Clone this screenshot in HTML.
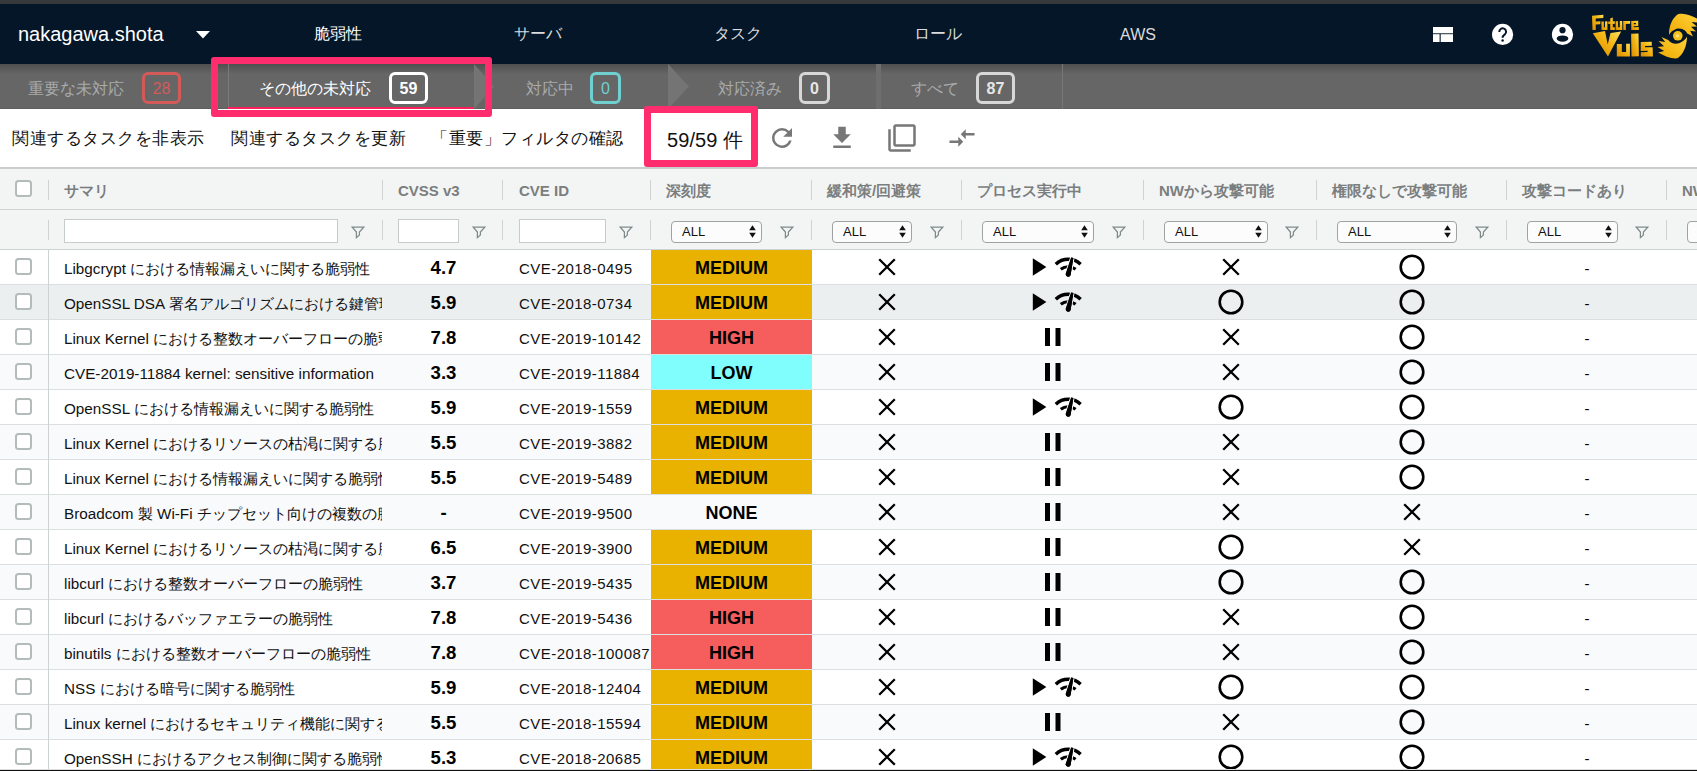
<!DOCTYPE html>
<html lang="ja"><head><meta charset="utf-8"><title>FutureVuls</title>
<style>
*{box-sizing:border-box}
html,body{margin:0;padding:0}
body{width:1697px;height:771px;overflow:hidden;position:relative;background:#fff;font-family:"Liberation Sans",sans-serif;color:#000}
.abs{position:absolute}
#topstrip{left:0;top:0;width:1697px;height:4px;background:#36393b}
#nav{left:0;top:4px;width:1697px;height:60px;background:#051628}
.navtxt{color:#fff;font-size:20px;top:23px;white-space:nowrap}
.navitem{color:#d9dbdd;font-size:16px;top:24px;width:200px;text-align:center;white-space:nowrap}
#tabs{left:0;top:64px;width:1697px;height:45px;background:#666;}
#tabshadow{left:0;top:64px;width:1697px;height:10px;background:linear-gradient(#4f4f4f,#666)}
.tabtxt{color:#a9abab;font-size:16px;top:79px;white-space:nowrap}
.badge{height:32px;top:72px;border:3px solid;border-radius:6px;font-size:16px;font-weight:bold;text-align:center;line-height:28px}
#toolbar .tb{position:absolute;top:126px;font-size:17.3px;letter-spacing:0.5px;white-space:nowrap;color:#111}
#hdr{left:0;top:167px;width:1697px;height:2px;background:#c9cdcd}
#hrow{left:0;top:169px;width:1697px;height:81px;background:#f3f5f5}
.hline{left:0;width:1697px;height:1px;background:#cdd2d2}
.htxt{top:182px;font-size:15px;font-weight:bold;color:#7b7e7e;white-space:nowrap}
.hsep{width:1px;background:#cdd3d3}
.inp{top:219px;height:24px;background:#fff;border:1px solid #c6cbcb}
.sel{top:221px;height:22px;background:#fcfcfc;border:1px solid #9ea2a2;border-radius:4px;font-size:13px;line-height:20px;padding-left:10px;color:#111}
.funnel{top:226px}
.row{left:0;width:1697px;height:35px;border-bottom:1px solid #dcdfe0}
.cell{position:absolute;top:0;height:34px;line-height:34px;white-space:nowrap;overflow:hidden}
.sum{font-size:15.25px;color:#111;padding-top:2px}
.sum .l{letter-spacing:0px}
.score{font-size:18.6px;font-weight:bold;text-align:center;padding-top:1px;padding-left:3px}
.cve{font-size:15px;letter-spacing:0.45px;color:#111;padding-top:2px}
.sev{font-size:18px;font-weight:bold;text-align:center;padding-top:1px}
.ic{display:flex;align-items:center;justify-content:center;padding-left:2px}
.cb{width:17px;height:17px;border:2px solid #b3bbbb;border-radius:3.5px;background:#fff}
.dash{font-size:15px;text-align:center;padding-top:2px;padding-left:2px}
</style></head><body>
<div id="topstrip" class="abs"></div>
<div id="nav" class="abs"></div>
<div class="abs navtxt" style="left:18px">nakagawa.shota</div>
<svg class="abs" style="left:196px;top:31px" width="14" height="8" viewBox="0 0 14 8"><path d="M0 0H14L7 7.5Z" fill="#fff"/></svg>
<div class="abs navitem" style="left:238px;color:#fff">脆弱性</div>
<div class="abs navitem" style="left:438px">サーバ</div>
<div class="abs navitem" style="left:638px">タスク</div>
<div class="abs navitem" style="left:838px">ロール</div>
<div class="abs navitem" style="left:1038px;top:26px">AWS</div>


<svg class="abs" style="left:1433px;top:27px" width="20" height="15" viewBox="0 0 20 15"><rect x="0" y="0" width="20" height="6.3" fill="#fff"/><rect x="0" y="7.2" width="6.6" height="7.8" fill="#fff"/><rect x="7.7" y="7.2" width="12.3" height="7.8" fill="#fff"/></svg>
<svg class="abs" style="left:1491px;top:23px" width="23" height="23" viewBox="0 0 23 23"><circle cx="11.6" cy="11.4" r="10.6" fill="#fff"/><path d="M8.3 9.0A3.4 3.4 0 1 1 13.8 11.4C12.3 12.5 11.6 13.1 11.6 14.8" fill="none" stroke="#051628" stroke-width="2"/><circle cx="11.6" cy="17.6" r="1.25" fill="#051628"/></svg>
<svg class="abs" style="left:1551px;top:23px" width="23" height="23" viewBox="0 0 23 23"><circle cx="11.5" cy="11.4" r="10.6" fill="#fff"/><circle cx="11.5" cy="7.2" r="3.1" fill="#051628"/><ellipse cx="11.5" cy="15.6" rx="5.8" ry="3.2" fill="#051628"/></svg>


<svg class="abs" style="left:1590px;top:12px" width="107" height="48" viewBox="0 0 107 48">
<defs>
<linearGradient id="lg" x1="0" y1="1" x2="1" y2="0"><stop offset="0" stop-color="#d98a00"/><stop offset="0.55" stop-color="#f3b412"/><stop offset="1" stop-color="#ffe15a"/></linearGradient>
<linearGradient id="lg2" x1="0" y1="1" x2="1" y2="0"><stop offset="0" stop-color="#f0a800"/><stop offset="1" stop-color="#ffd23a"/></linearGradient>
</defs>
<g fill="url(#lg)">
<!-- Future -->
<path d="M2 3.8L13.4 2.8L13.3 6.0L5.7 6.6L5.7 9.6L10.4 9.3L10.3 12.2L5.7 12.4L5.8 18L2.5 18Z"/>
<path d="M11.4 9.6L13.8 9.5L13.9 15.3L15.0 15.3L15.0 9.4L17.4 9.3L17.4 18L11.5 18Z"/>
<path d="M20.2 6.6L22.8 5.6L22.8 9.3L24.8 9.2L24.8 11.8L22.8 11.9L22.8 15.2L24.8 15.2L24.8 18L20.2 18L20.2 11.9L18.2 11.9L18.2 9.4L20.2 9.4Z"/>
<path d="M25.6 9.3L28 9.2L28.1 15.2L29.8 15.2L29.8 9.1L32.2 9L32.3 18L25.7 18Z"/>
<path d="M33.2 9L40.2 8.9L40.1 11.8L35.8 11.9L35.9 18L33.3 18Z"/>
<path d="M41.2 9L48.2 8.8L48.3 14.1L43.8 14.2L43.8 15.3L48.7 15.1L48.9 18L41.3 18ZM43.8 11.0L45.9 11.0L45.9 12.3L43.8 12.3Z" fill-rule="evenodd"/>
<!-- V -->
<path d="M2.8 21.2L15 19L17.7 32.4L20.5 20.9L31.1 19.6L18 44.5Z"/>
<!-- u -->
<path d="M26.8 32L31.8 32L31.8 40L36.1 40L36.1 31.8L39.9 31.8L39.9 44.5L26.8 44.5Z"/>
<!-- l -->
<path d="M41.1 21.8L48.5 21.6L48.9 44.2L41.5 44.5Z"/>
<!-- s -->
<path d="M50.7 29.9L61.7 29.7L61.8 33.8L55 33.9L55 35.3L62.6 35.2L62.9 44.5L50.8 44.5L50.8 40.2L57.6 40.1L57.6 38.8L50.7 38.9Z"/>
</g>
<!-- emblem -->
<g fill="url(#lg2)">
<path d="M79 23C78.8 13 83 5 88.5 2C95 0.8 101 3.5 107 6.5L107 10.5L101.5 10L107 14.5L101 14.8L106 19.5L100.2 18.8L103 24.5L97.2 21.5C95 17.5 90 15.8 86 17C82.5 18.2 80.2 20.8 79 23Z"/>
<path d="M97 24.5C97 35 92.5 43 87.5 46.3C81 47 74.5 44 68.2 40.5L74.2 39L67.5 35L74 34.3L68.5 29L75.2 30L71.5 25L78.2 28C80.5 31.2 85 32.5 89 31.2C92.5 30 95.5 27.5 97 24.5Z"/>
</g>
<ellipse cx="87.8" cy="23.8" rx="9" ry="6.3" transform="rotate(-18 87.8 23.8)" fill="#051628"/>
<circle cx="87.8" cy="23.8" r="4.8" fill="#f6c21c"/>
<circle cx="87.5" cy="23.8" r="1.6" fill="#ffe38a"/>
</svg>


<div id="tabs" class="abs"></div>
<div id="tabshadow" class="abs"></div>
<div class="abs" style="left:0;top:108px;width:1697px;height:1px;background:#5e5e5e"></div>
<div class="abs tabtxt" style="left:28px">重要な未対応</div>
<div class="abs badge" style="left:142px;width:39px;border-color:#d45a5a;color:#d45a5a;font-weight:normal">28</div>
<div class="abs" style="left:228px;top:64px;width:1px;height:45px;background:#7b7b7b"></div>
<div class="abs tabtxt" style="left:259px;color:#fff">その他の未対応</div>
<div class="abs badge" style="left:389px;width:39px;border-color:#fff;color:#fff">59</div>
<div class="abs" style="left:228px;top:107px;width:246px;height:2px;background:#ff1f5a"></div>
<svg class="abs" style="left:474px;top:64px" width="22" height="45" viewBox="0 0 22 45"><path d="M0 0L20 22.5L0 45Z" fill="#747474"/></svg>
<div class="abs tabtxt" style="left:526px">対応中</div>
<div class="abs badge" style="left:590px;width:31px;border-color:#6fd0d0;color:#6fd0d0;font-weight:normal">0</div>
<svg class="abs" style="left:668px;top:64px" width="22" height="45" viewBox="0 0 22 45"><path d="M0 0L21 22.5L0 45Z" fill="#747474"/></svg>
<div class="abs tabtxt" style="left:718px">対応済み</div>
<div class="abs badge" style="left:799px;width:31px;border-color:#d7d7d7;color:#e6e6e6">0</div>
<div class="abs" style="left:876px;top:64px;width:5px;height:45px;background:#6e6e6e"></div>
<div class="abs tabtxt" style="left:911px">すべて</div>
<div class="abs badge" style="left:976px;width:39px;border-color:#d7d7d7;color:#e6e6e6">87</div>
<div class="abs" style="left:1062px;top:64px;width:1px;height:45px;background:#777"></div>


<div class="abs" style="left:211px;top:57px;width:281px;height:60px;border:7px solid #ff2d6e;border-radius:3px"></div>


<div id="toolbar">
<div class="tb" style="left:12px">関連するタスクを非表示</div>
<div class="tb" style="left:231px">関連するタスクを更新</div>
<div class="tb" style="left:431px">「重要」フィルタの確認</div>
<div class="tb" style="left:667px;font-size:20px;top:127px;letter-spacing:0.1px">59/59 件</div>
</div>
<div class="abs" style="left:644px;top:106px;width:114px;height:61px;border:7px solid #ff2d6e;border-radius:3px"></div>
<svg class="abs" style="left:767px;top:123px" width="30" height="30" viewBox="0 0 24 24"><path d="M17.65 6.35A7.96 7.96 0 0 0 12 4a8 8 0 1 0 7.73 10h-2.08A6 6 0 1 1 12 6c1.66 0 3.14.69 4.22 1.78L13 11h7V4l-2.35 2.35z" fill="#777"/></svg>
<svg class="abs" style="left:827px;top:123px" width="30" height="30" viewBox="0 0 24 24"><path d="M5 20h14v-2H5v2zM19 9h-4V3H9v6H5l7 7 7-7z" fill="#777"/></svg>
<svg class="abs" style="left:887px;top:123px" width="30" height="30" viewBox="0 0 24 24"><path d="M3 5H1v16c0 1.1.9 2 2 2h16v-2H3V5zm18-4H7c-1.1 0-2 .9-2 2v14c0 1.1.9 2 2 2h14c1.1 0 2-.9 2-2V3c0-1.1-.9-2-2-2zm0 16H7V3h14v14z" fill="#777"/></svg>
<svg class="abs" style="left:947px;top:123px" width="30" height="30" viewBox="0 0 24 24"><path d="M9.01 14H2v2h7.01v3L13 15l-3.99-4v3zm5.98-1v-3H22V8h-7.01V5L11 9l3.99 4z" fill="#777"/></svg>


<div id="hdr" class="abs"></div>
<div id="hrow" class="abs"></div>
<div class="abs hline" style="top:209px"></div>
<div class="abs hline" style="top:249px"></div>
<div class="abs cb" style="left:15px;top:180px"></div>

<div class="abs htxt" style="left:64px">サマリ</div>
<div class="abs htxt" style="left:398px">CVSS v3</div>
<div class="abs htxt" style="left:519px">CVE ID</div>
<div class="abs htxt" style="left:666px">深刻度</div>
<div class="abs htxt" style="left:827px">緩和策/回避策</div>
<div class="abs htxt" style="left:977px">プロセス実行中</div>
<div class="abs htxt" style="left:1159px">NWから攻撃可能</div>
<div class="abs htxt" style="left:1332px">権限なしで攻撃可能</div>
<div class="abs htxt" style="left:1522px">攻撃コードあり</div>
<div class="abs htxt" style="left:1682px">NW</div>
<div class="abs hsep" style="left:48px;top:180px;height:20px"></div>
<div class="abs hsep" style="left:48px;top:220px;height:20px"></div>
<div class="abs hsep" style="left:382px;top:180px;height:20px"></div>
<div class="abs hsep" style="left:382px;top:220px;height:20px"></div>
<div class="abs hsep" style="left:502px;top:180px;height:20px"></div>
<div class="abs hsep" style="left:502px;top:220px;height:20px"></div>
<div class="abs hsep" style="left:650px;top:180px;height:20px"></div>
<div class="abs hsep" style="left:650px;top:220px;height:20px"></div>
<div class="abs hsep" style="left:811px;top:180px;height:20px"></div>
<div class="abs hsep" style="left:811px;top:220px;height:20px"></div>
<div class="abs hsep" style="left:961px;top:180px;height:20px"></div>
<div class="abs hsep" style="left:961px;top:220px;height:20px"></div>
<div class="abs hsep" style="left:1143px;top:180px;height:20px"></div>
<div class="abs hsep" style="left:1143px;top:220px;height:20px"></div>
<div class="abs hsep" style="left:1316px;top:180px;height:20px"></div>
<div class="abs hsep" style="left:1316px;top:220px;height:20px"></div>
<div class="abs hsep" style="left:1506px;top:180px;height:20px"></div>
<div class="abs hsep" style="left:1506px;top:220px;height:20px"></div>
<div class="abs hsep" style="left:1666px;top:180px;height:20px"></div>
<div class="abs hsep" style="left:1666px;top:220px;height:20px"></div>
<div class="abs inp" style="left:64px;width:274px"></div>
<svg class="abs funnel" style="left:351px" width="14" height="13" viewBox="0 0 14 13"><path d="M1.3 1.2H12.7L8.4 6.0V9.0L5.4 11.6V6.0Z" fill="none" stroke="#7f8b8b" stroke-width="1.25" stroke-linejoin="miter"/></svg>
<div class="abs inp" style="left:398px;width:61px"></div>
<svg class="abs funnel" style="left:472px" width="14" height="13" viewBox="0 0 14 13"><path d="M1.3 1.2H12.7L8.4 6.0V9.0L5.4 11.6V6.0Z" fill="none" stroke="#7f8b8b" stroke-width="1.25" stroke-linejoin="miter"/></svg>
<div class="abs inp" style="left:519px;width:87px"></div>
<svg class="abs funnel" style="left:619px" width="14" height="13" viewBox="0 0 14 13"><path d="M1.3 1.2H12.7L8.4 6.0V9.0L5.4 11.6V6.0Z" fill="none" stroke="#7f8b8b" stroke-width="1.25" stroke-linejoin="miter"/></svg>
<div class="abs sel" style="left:671px;width:91px">ALL<svg style="position:absolute;right:5px;top:3px" width="7" height="13" viewBox="0 0 7 13"><path d="M3.5 0.3L6.8 5.2H0.2Z M3.5 12.7L6.8 7.8H0.2Z" fill="#111"/></svg></div>
<svg class="abs funnel" style="left:780px" width="14" height="13" viewBox="0 0 14 13"><path d="M1.3 1.2H12.7L8.4 6.0V9.0L5.4 11.6V6.0Z" fill="none" stroke="#7f8b8b" stroke-width="1.25" stroke-linejoin="miter"/></svg>
<div class="abs sel" style="left:832px;width:80px">ALL<svg style="position:absolute;right:5px;top:3px" width="7" height="13" viewBox="0 0 7 13"><path d="M3.5 0.3L6.8 5.2H0.2Z M3.5 12.7L6.8 7.8H0.2Z" fill="#111"/></svg></div>
<svg class="abs funnel" style="left:930px" width="14" height="13" viewBox="0 0 14 13"><path d="M1.3 1.2H12.7L8.4 6.0V9.0L5.4 11.6V6.0Z" fill="none" stroke="#7f8b8b" stroke-width="1.25" stroke-linejoin="miter"/></svg>
<div class="abs sel" style="left:982px;width:112px">ALL<svg style="position:absolute;right:5px;top:3px" width="7" height="13" viewBox="0 0 7 13"><path d="M3.5 0.3L6.8 5.2H0.2Z M3.5 12.7L6.8 7.8H0.2Z" fill="#111"/></svg></div>
<svg class="abs funnel" style="left:1112px" width="14" height="13" viewBox="0 0 14 13"><path d="M1.3 1.2H12.7L8.4 6.0V9.0L5.4 11.6V6.0Z" fill="none" stroke="#7f8b8b" stroke-width="1.25" stroke-linejoin="miter"/></svg>
<div class="abs sel" style="left:1164px;width:104px">ALL<svg style="position:absolute;right:5px;top:3px" width="7" height="13" viewBox="0 0 7 13"><path d="M3.5 0.3L6.8 5.2H0.2Z M3.5 12.7L6.8 7.8H0.2Z" fill="#111"/></svg></div>
<svg class="abs funnel" style="left:1285px" width="14" height="13" viewBox="0 0 14 13"><path d="M1.3 1.2H12.7L8.4 6.0V9.0L5.4 11.6V6.0Z" fill="none" stroke="#7f8b8b" stroke-width="1.25" stroke-linejoin="miter"/></svg>
<div class="abs sel" style="left:1337px;width:120px">ALL<svg style="position:absolute;right:5px;top:3px" width="7" height="13" viewBox="0 0 7 13"><path d="M3.5 0.3L6.8 5.2H0.2Z M3.5 12.7L6.8 7.8H0.2Z" fill="#111"/></svg></div>
<svg class="abs funnel" style="left:1475px" width="14" height="13" viewBox="0 0 14 13"><path d="M1.3 1.2H12.7L8.4 6.0V9.0L5.4 11.6V6.0Z" fill="none" stroke="#7f8b8b" stroke-width="1.25" stroke-linejoin="miter"/></svg>
<div class="abs sel" style="left:1527px;width:91px">ALL<svg style="position:absolute;right:5px;top:3px" width="7" height="13" viewBox="0 0 7 13"><path d="M3.5 0.3L6.8 5.2H0.2Z M3.5 12.7L6.8 7.8H0.2Z" fill="#111"/></svg></div>
<svg class="abs funnel" style="left:1635px" width="14" height="13" viewBox="0 0 14 13"><path d="M1.3 1.2H12.7L8.4 6.0V9.0L5.4 11.6V6.0Z" fill="none" stroke="#7f8b8b" stroke-width="1.25" stroke-linejoin="miter"/></svg>
<div class="abs sel" style="left:1687px;width:40px"></div>
<div class="abs row" style="top:250px;background:#fff">
<div class="cb" style="position:absolute;left:15px;top:7.5px"></div>
<div style="position:absolute;left:48px;top:0;width:1px;height:35px;background:#cdd3d3"></div>
<div class="cell sum" style="left:64px;width:318px"><span class="l">Libgcrypt </span>における情報漏えいに関する脆弱性</div>
<div class="cell score" style="left:382px;width:120px">4.7</div>
<div class="cell cve" style="left:519px;width:131px">CVE-2018-0495</div>
<div class="cell sev" style="left:651px;width:161px;background:#e9b100">MEDIUM</div>
<div class="cell ic" style="left:811px;width:150px"><svg class="ix" width="18" height="18" viewBox="0 0 18 18"><path d="M1.2 1.2L16.8 16.8M16.8 1.2L1.2 16.8" stroke="#000" stroke-width="2.3" stroke-linecap="butt"/></svg></div>
<div class="cell" style="left:961px;width:182px"><svg style="position:absolute;left:71px;top:6px" width="52" height="23" viewBox="0 0 52 23"><path d="M0.8 2.2L14.4 10.95L0.8 19.7Z" fill="#000"/><path d="M23.8 8.2A18.1 18.1 0 0 1 48.6 8.2" fill="none" stroke="#000" stroke-width="3.5"/><path d="M28.8 13.3A12 12 0 0 1 43.6 13.3" fill="none" stroke="#000" stroke-width="3.2"/><path d="M39.2 1.6L41.4 1.9L38.6 18.9A2.5 2.5 0 0 1 33.7 18.1Z" fill="#000" stroke="#fff" stroke-width="2.2" paint-order="stroke"/><path d="M39.2 1.6L41.4 1.9L38.6 18.9A2.5 2.5 0 0 1 33.7 18.1Z" fill="#000"/></svg></div>
<div class="cell ic" style="left:1143px;width:173px"><svg class="ix" width="18" height="18" viewBox="0 0 18 18"><path d="M1.2 1.2L16.8 16.8M16.8 1.2L1.2 16.8" stroke="#000" stroke-width="2.3" stroke-linecap="butt"/></svg></div>
<div class="cell ic" style="left:1316px;width:190px"><svg class="io" width="26" height="26" viewBox="0 0 26 26"><circle cx="13" cy="13" r="11.3" fill="none" stroke="#000" stroke-width="2.6"/></svg></div>
<div class="cell dash" style="left:1506px;width:160px">-</div>
</div>
<div class="abs row" style="top:285px;background:#eceff0">
<div class="cb" style="position:absolute;left:15px;top:7.5px"></div>
<div style="position:absolute;left:48px;top:0;width:1px;height:35px;background:#cdd3d3"></div>
<div class="cell sum" style="left:64px;width:318px"><span class="l">OpenSSL DSA </span>署名アルゴリズムにおける鍵管理の脆弱性</div>
<div class="cell score" style="left:382px;width:120px">5.9</div>
<div class="cell cve" style="left:519px;width:131px">CVE-2018-0734</div>
<div class="cell sev" style="left:651px;width:161px;background:#e9b100">MEDIUM</div>
<div class="cell ic" style="left:811px;width:150px"><svg class="ix" width="18" height="18" viewBox="0 0 18 18"><path d="M1.2 1.2L16.8 16.8M16.8 1.2L1.2 16.8" stroke="#000" stroke-width="2.3" stroke-linecap="butt"/></svg></div>
<div class="cell" style="left:961px;width:182px"><svg style="position:absolute;left:71px;top:6px" width="52" height="23" viewBox="0 0 52 23"><path d="M0.8 2.2L14.4 10.95L0.8 19.7Z" fill="#000"/><path d="M23.8 8.2A18.1 18.1 0 0 1 48.6 8.2" fill="none" stroke="#000" stroke-width="3.5"/><path d="M28.8 13.3A12 12 0 0 1 43.6 13.3" fill="none" stroke="#000" stroke-width="3.2"/><path d="M39.2 1.6L41.4 1.9L38.6 18.9A2.5 2.5 0 0 1 33.7 18.1Z" fill="#000" stroke="#eceff0" stroke-width="2.2" paint-order="stroke"/><path d="M39.2 1.6L41.4 1.9L38.6 18.9A2.5 2.5 0 0 1 33.7 18.1Z" fill="#000"/></svg></div>
<div class="cell ic" style="left:1143px;width:173px"><svg class="io" width="26" height="26" viewBox="0 0 26 26"><circle cx="13" cy="13" r="11.3" fill="none" stroke="#000" stroke-width="2.6"/></svg></div>
<div class="cell ic" style="left:1316px;width:190px"><svg class="io" width="26" height="26" viewBox="0 0 26 26"><circle cx="13" cy="13" r="11.3" fill="none" stroke="#000" stroke-width="2.6"/></svg></div>
<div class="cell dash" style="left:1506px;width:160px">-</div>
</div>
<div class="abs row" style="top:320px;background:#fff">
<div class="cb" style="position:absolute;left:15px;top:7.5px"></div>
<div style="position:absolute;left:48px;top:0;width:1px;height:35px;background:#cdd3d3"></div>
<div class="cell sum" style="left:64px;width:318px"><span class="l">Linux Kernel </span>における整数オーバーフローの脆弱性</div>
<div class="cell score" style="left:382px;width:120px">7.8</div>
<div class="cell cve" style="left:519px;width:131px">CVE-2019-10142</div>
<div class="cell sev" style="left:651px;width:161px;background:#f65e5e">HIGH</div>
<div class="cell ic" style="left:811px;width:150px"><svg class="ix" width="18" height="18" viewBox="0 0 18 18"><path d="M1.2 1.2L16.8 16.8M16.8 1.2L1.2 16.8" stroke="#000" stroke-width="2.3" stroke-linecap="butt"/></svg></div>
<div class="cell ic" style="left:961px;width:182px"><svg width="16" height="18" viewBox="0 0 16 18"><rect x="0" y="0" width="5" height="18" fill="#000"/><rect x="10.5" y="0" width="5" height="18" fill="#000"/></svg></div>
<div class="cell ic" style="left:1143px;width:173px"><svg class="ix" width="18" height="18" viewBox="0 0 18 18"><path d="M1.2 1.2L16.8 16.8M16.8 1.2L1.2 16.8" stroke="#000" stroke-width="2.3" stroke-linecap="butt"/></svg></div>
<div class="cell ic" style="left:1316px;width:190px"><svg class="io" width="26" height="26" viewBox="0 0 26 26"><circle cx="13" cy="13" r="11.3" fill="none" stroke="#000" stroke-width="2.6"/></svg></div>
<div class="cell dash" style="left:1506px;width:160px">-</div>
</div>
<div class="abs row" style="top:355px;background:#f9fafc">
<div class="cb" style="position:absolute;left:15px;top:7.5px"></div>
<div style="position:absolute;left:48px;top:0;width:1px;height:35px;background:#cdd3d3"></div>
<div class="cell sum" style="left:64px;width:318px"><span class="l">CVE-2019-11884 kernel: sensitive information</span></div>
<div class="cell score" style="left:382px;width:120px">3.3</div>
<div class="cell cve" style="left:519px;width:131px">CVE-2019-11884</div>
<div class="cell sev" style="left:651px;width:161px;background:#80fdfd">LOW</div>
<div class="cell ic" style="left:811px;width:150px"><svg class="ix" width="18" height="18" viewBox="0 0 18 18"><path d="M1.2 1.2L16.8 16.8M16.8 1.2L1.2 16.8" stroke="#000" stroke-width="2.3" stroke-linecap="butt"/></svg></div>
<div class="cell ic" style="left:961px;width:182px"><svg width="16" height="18" viewBox="0 0 16 18"><rect x="0" y="0" width="5" height="18" fill="#000"/><rect x="10.5" y="0" width="5" height="18" fill="#000"/></svg></div>
<div class="cell ic" style="left:1143px;width:173px"><svg class="ix" width="18" height="18" viewBox="0 0 18 18"><path d="M1.2 1.2L16.8 16.8M16.8 1.2L1.2 16.8" stroke="#000" stroke-width="2.3" stroke-linecap="butt"/></svg></div>
<div class="cell ic" style="left:1316px;width:190px"><svg class="io" width="26" height="26" viewBox="0 0 26 26"><circle cx="13" cy="13" r="11.3" fill="none" stroke="#000" stroke-width="2.6"/></svg></div>
<div class="cell dash" style="left:1506px;width:160px">-</div>
</div>
<div class="abs row" style="top:390px;background:#fff">
<div class="cb" style="position:absolute;left:15px;top:7.5px"></div>
<div style="position:absolute;left:48px;top:0;width:1px;height:35px;background:#cdd3d3"></div>
<div class="cell sum" style="left:64px;width:318px"><span class="l">OpenSSL </span>における情報漏えいに関する脆弱性</div>
<div class="cell score" style="left:382px;width:120px">5.9</div>
<div class="cell cve" style="left:519px;width:131px">CVE-2019-1559</div>
<div class="cell sev" style="left:651px;width:161px;background:#e9b100">MEDIUM</div>
<div class="cell ic" style="left:811px;width:150px"><svg class="ix" width="18" height="18" viewBox="0 0 18 18"><path d="M1.2 1.2L16.8 16.8M16.8 1.2L1.2 16.8" stroke="#000" stroke-width="2.3" stroke-linecap="butt"/></svg></div>
<div class="cell" style="left:961px;width:182px"><svg style="position:absolute;left:71px;top:6px" width="52" height="23" viewBox="0 0 52 23"><path d="M0.8 2.2L14.4 10.95L0.8 19.7Z" fill="#000"/><path d="M23.8 8.2A18.1 18.1 0 0 1 48.6 8.2" fill="none" stroke="#000" stroke-width="3.5"/><path d="M28.8 13.3A12 12 0 0 1 43.6 13.3" fill="none" stroke="#000" stroke-width="3.2"/><path d="M39.2 1.6L41.4 1.9L38.6 18.9A2.5 2.5 0 0 1 33.7 18.1Z" fill="#000" stroke="#fff" stroke-width="2.2" paint-order="stroke"/><path d="M39.2 1.6L41.4 1.9L38.6 18.9A2.5 2.5 0 0 1 33.7 18.1Z" fill="#000"/></svg></div>
<div class="cell ic" style="left:1143px;width:173px"><svg class="io" width="26" height="26" viewBox="0 0 26 26"><circle cx="13" cy="13" r="11.3" fill="none" stroke="#000" stroke-width="2.6"/></svg></div>
<div class="cell ic" style="left:1316px;width:190px"><svg class="io" width="26" height="26" viewBox="0 0 26 26"><circle cx="13" cy="13" r="11.3" fill="none" stroke="#000" stroke-width="2.6"/></svg></div>
<div class="cell dash" style="left:1506px;width:160px">-</div>
</div>
<div class="abs row" style="top:425px;background:#f9fafc">
<div class="cb" style="position:absolute;left:15px;top:7.5px"></div>
<div style="position:absolute;left:48px;top:0;width:1px;height:35px;background:#cdd3d3"></div>
<div class="cell sum" style="left:64px;width:318px"><span class="l">Linux Kernel </span>におけるリソースの枯渇に関する脆弱性</div>
<div class="cell score" style="left:382px;width:120px">5.5</div>
<div class="cell cve" style="left:519px;width:131px">CVE-2019-3882</div>
<div class="cell sev" style="left:651px;width:161px;background:#e9b100">MEDIUM</div>
<div class="cell ic" style="left:811px;width:150px"><svg class="ix" width="18" height="18" viewBox="0 0 18 18"><path d="M1.2 1.2L16.8 16.8M16.8 1.2L1.2 16.8" stroke="#000" stroke-width="2.3" stroke-linecap="butt"/></svg></div>
<div class="cell ic" style="left:961px;width:182px"><svg width="16" height="18" viewBox="0 0 16 18"><rect x="0" y="0" width="5" height="18" fill="#000"/><rect x="10.5" y="0" width="5" height="18" fill="#000"/></svg></div>
<div class="cell ic" style="left:1143px;width:173px"><svg class="ix" width="18" height="18" viewBox="0 0 18 18"><path d="M1.2 1.2L16.8 16.8M16.8 1.2L1.2 16.8" stroke="#000" stroke-width="2.3" stroke-linecap="butt"/></svg></div>
<div class="cell ic" style="left:1316px;width:190px"><svg class="io" width="26" height="26" viewBox="0 0 26 26"><circle cx="13" cy="13" r="11.3" fill="none" stroke="#000" stroke-width="2.6"/></svg></div>
<div class="cell dash" style="left:1506px;width:160px">-</div>
</div>
<div class="abs row" style="top:460px;background:#fff">
<div class="cb" style="position:absolute;left:15px;top:7.5px"></div>
<div style="position:absolute;left:48px;top:0;width:1px;height:35px;background:#cdd3d3"></div>
<div class="cell sum" style="left:64px;width:318px"><span class="l">Linux Kernel </span>における情報漏えいに関する脆弱性</div>
<div class="cell score" style="left:382px;width:120px">5.5</div>
<div class="cell cve" style="left:519px;width:131px">CVE-2019-5489</div>
<div class="cell sev" style="left:651px;width:161px;background:#e9b100">MEDIUM</div>
<div class="cell ic" style="left:811px;width:150px"><svg class="ix" width="18" height="18" viewBox="0 0 18 18"><path d="M1.2 1.2L16.8 16.8M16.8 1.2L1.2 16.8" stroke="#000" stroke-width="2.3" stroke-linecap="butt"/></svg></div>
<div class="cell ic" style="left:961px;width:182px"><svg width="16" height="18" viewBox="0 0 16 18"><rect x="0" y="0" width="5" height="18" fill="#000"/><rect x="10.5" y="0" width="5" height="18" fill="#000"/></svg></div>
<div class="cell ic" style="left:1143px;width:173px"><svg class="ix" width="18" height="18" viewBox="0 0 18 18"><path d="M1.2 1.2L16.8 16.8M16.8 1.2L1.2 16.8" stroke="#000" stroke-width="2.3" stroke-linecap="butt"/></svg></div>
<div class="cell ic" style="left:1316px;width:190px"><svg class="io" width="26" height="26" viewBox="0 0 26 26"><circle cx="13" cy="13" r="11.3" fill="none" stroke="#000" stroke-width="2.6"/></svg></div>
<div class="cell dash" style="left:1506px;width:160px">-</div>
</div>
<div class="abs row" style="top:495px;background:#f9fafc">
<div class="cb" style="position:absolute;left:15px;top:7.5px"></div>
<div style="position:absolute;left:48px;top:0;width:1px;height:35px;background:#cdd3d3"></div>
<div class="cell sum" style="left:64px;width:318px"><span class="l">Broadcom </span>製<span class="l"> Wi-Fi </span>チップセット向けの複数の脆弱性</div>
<div class="cell score" style="left:382px;width:120px">-</div>
<div class="cell cve" style="left:519px;width:131px">CVE-2019-9500</div>
<div class="cell sev" style="left:651px;width:161px;background:transparent">NONE</div>
<div class="cell ic" style="left:811px;width:150px"><svg class="ix" width="18" height="18" viewBox="0 0 18 18"><path d="M1.2 1.2L16.8 16.8M16.8 1.2L1.2 16.8" stroke="#000" stroke-width="2.3" stroke-linecap="butt"/></svg></div>
<div class="cell ic" style="left:961px;width:182px"><svg width="16" height="18" viewBox="0 0 16 18"><rect x="0" y="0" width="5" height="18" fill="#000"/><rect x="10.5" y="0" width="5" height="18" fill="#000"/></svg></div>
<div class="cell ic" style="left:1143px;width:173px"><svg class="ix" width="18" height="18" viewBox="0 0 18 18"><path d="M1.2 1.2L16.8 16.8M16.8 1.2L1.2 16.8" stroke="#000" stroke-width="2.3" stroke-linecap="butt"/></svg></div>
<div class="cell ic" style="left:1316px;width:190px"><svg class="ix" width="18" height="18" viewBox="0 0 18 18"><path d="M1.2 1.2L16.8 16.8M16.8 1.2L1.2 16.8" stroke="#000" stroke-width="2.3" stroke-linecap="butt"/></svg></div>
<div class="cell dash" style="left:1506px;width:160px">-</div>
</div>
<div class="abs row" style="top:530px;background:#fff">
<div class="cb" style="position:absolute;left:15px;top:7.5px"></div>
<div style="position:absolute;left:48px;top:0;width:1px;height:35px;background:#cdd3d3"></div>
<div class="cell sum" style="left:64px;width:318px"><span class="l">Linux Kernel </span>におけるリソースの枯渇に関する脆弱性</div>
<div class="cell score" style="left:382px;width:120px">6.5</div>
<div class="cell cve" style="left:519px;width:131px">CVE-2019-3900</div>
<div class="cell sev" style="left:651px;width:161px;background:#e9b100">MEDIUM</div>
<div class="cell ic" style="left:811px;width:150px"><svg class="ix" width="18" height="18" viewBox="0 0 18 18"><path d="M1.2 1.2L16.8 16.8M16.8 1.2L1.2 16.8" stroke="#000" stroke-width="2.3" stroke-linecap="butt"/></svg></div>
<div class="cell ic" style="left:961px;width:182px"><svg width="16" height="18" viewBox="0 0 16 18"><rect x="0" y="0" width="5" height="18" fill="#000"/><rect x="10.5" y="0" width="5" height="18" fill="#000"/></svg></div>
<div class="cell ic" style="left:1143px;width:173px"><svg class="io" width="26" height="26" viewBox="0 0 26 26"><circle cx="13" cy="13" r="11.3" fill="none" stroke="#000" stroke-width="2.6"/></svg></div>
<div class="cell ic" style="left:1316px;width:190px"><svg class="ix" width="18" height="18" viewBox="0 0 18 18"><path d="M1.2 1.2L16.8 16.8M16.8 1.2L1.2 16.8" stroke="#000" stroke-width="2.3" stroke-linecap="butt"/></svg></div>
<div class="cell dash" style="left:1506px;width:160px">-</div>
</div>
<div class="abs row" style="top:565px;background:#f9fafc">
<div class="cb" style="position:absolute;left:15px;top:7.5px"></div>
<div style="position:absolute;left:48px;top:0;width:1px;height:35px;background:#cdd3d3"></div>
<div class="cell sum" style="left:64px;width:318px"><span class="l">libcurl </span>における整数オーバーフローの脆弱性</div>
<div class="cell score" style="left:382px;width:120px">3.7</div>
<div class="cell cve" style="left:519px;width:131px">CVE-2019-5435</div>
<div class="cell sev" style="left:651px;width:161px;background:#e9b100">MEDIUM</div>
<div class="cell ic" style="left:811px;width:150px"><svg class="ix" width="18" height="18" viewBox="0 0 18 18"><path d="M1.2 1.2L16.8 16.8M16.8 1.2L1.2 16.8" stroke="#000" stroke-width="2.3" stroke-linecap="butt"/></svg></div>
<div class="cell ic" style="left:961px;width:182px"><svg width="16" height="18" viewBox="0 0 16 18"><rect x="0" y="0" width="5" height="18" fill="#000"/><rect x="10.5" y="0" width="5" height="18" fill="#000"/></svg></div>
<div class="cell ic" style="left:1143px;width:173px"><svg class="io" width="26" height="26" viewBox="0 0 26 26"><circle cx="13" cy="13" r="11.3" fill="none" stroke="#000" stroke-width="2.6"/></svg></div>
<div class="cell ic" style="left:1316px;width:190px"><svg class="io" width="26" height="26" viewBox="0 0 26 26"><circle cx="13" cy="13" r="11.3" fill="none" stroke="#000" stroke-width="2.6"/></svg></div>
<div class="cell dash" style="left:1506px;width:160px">-</div>
</div>
<div class="abs row" style="top:600px;background:#fff">
<div class="cb" style="position:absolute;left:15px;top:7.5px"></div>
<div style="position:absolute;left:48px;top:0;width:1px;height:35px;background:#cdd3d3"></div>
<div class="cell sum" style="left:64px;width:318px"><span class="l">libcurl </span>におけるバッファエラーの脆弱性</div>
<div class="cell score" style="left:382px;width:120px">7.8</div>
<div class="cell cve" style="left:519px;width:131px">CVE-2019-5436</div>
<div class="cell sev" style="left:651px;width:161px;background:#f65e5e">HIGH</div>
<div class="cell ic" style="left:811px;width:150px"><svg class="ix" width="18" height="18" viewBox="0 0 18 18"><path d="M1.2 1.2L16.8 16.8M16.8 1.2L1.2 16.8" stroke="#000" stroke-width="2.3" stroke-linecap="butt"/></svg></div>
<div class="cell ic" style="left:961px;width:182px"><svg width="16" height="18" viewBox="0 0 16 18"><rect x="0" y="0" width="5" height="18" fill="#000"/><rect x="10.5" y="0" width="5" height="18" fill="#000"/></svg></div>
<div class="cell ic" style="left:1143px;width:173px"><svg class="ix" width="18" height="18" viewBox="0 0 18 18"><path d="M1.2 1.2L16.8 16.8M16.8 1.2L1.2 16.8" stroke="#000" stroke-width="2.3" stroke-linecap="butt"/></svg></div>
<div class="cell ic" style="left:1316px;width:190px"><svg class="io" width="26" height="26" viewBox="0 0 26 26"><circle cx="13" cy="13" r="11.3" fill="none" stroke="#000" stroke-width="2.6"/></svg></div>
<div class="cell dash" style="left:1506px;width:160px">-</div>
</div>
<div class="abs row" style="top:635px;background:#f9fafc">
<div class="cb" style="position:absolute;left:15px;top:7.5px"></div>
<div style="position:absolute;left:48px;top:0;width:1px;height:35px;background:#cdd3d3"></div>
<div class="cell sum" style="left:64px;width:318px"><span class="l">binutils </span>における整数オーバーフローの脆弱性</div>
<div class="cell score" style="left:382px;width:120px">7.8</div>
<div class="cell cve" style="left:519px;width:131px">CVE-2018-1000876</div>
<div class="cell sev" style="left:651px;width:161px;background:#f65e5e">HIGH</div>
<div class="cell ic" style="left:811px;width:150px"><svg class="ix" width="18" height="18" viewBox="0 0 18 18"><path d="M1.2 1.2L16.8 16.8M16.8 1.2L1.2 16.8" stroke="#000" stroke-width="2.3" stroke-linecap="butt"/></svg></div>
<div class="cell ic" style="left:961px;width:182px"><svg width="16" height="18" viewBox="0 0 16 18"><rect x="0" y="0" width="5" height="18" fill="#000"/><rect x="10.5" y="0" width="5" height="18" fill="#000"/></svg></div>
<div class="cell ic" style="left:1143px;width:173px"><svg class="ix" width="18" height="18" viewBox="0 0 18 18"><path d="M1.2 1.2L16.8 16.8M16.8 1.2L1.2 16.8" stroke="#000" stroke-width="2.3" stroke-linecap="butt"/></svg></div>
<div class="cell ic" style="left:1316px;width:190px"><svg class="io" width="26" height="26" viewBox="0 0 26 26"><circle cx="13" cy="13" r="11.3" fill="none" stroke="#000" stroke-width="2.6"/></svg></div>
<div class="cell dash" style="left:1506px;width:160px">-</div>
</div>
<div class="abs row" style="top:670px;background:#fff">
<div class="cb" style="position:absolute;left:15px;top:7.5px"></div>
<div style="position:absolute;left:48px;top:0;width:1px;height:35px;background:#cdd3d3"></div>
<div class="cell sum" style="left:64px;width:318px"><span class="l">NSS </span>における暗号に関する脆弱性</div>
<div class="cell score" style="left:382px;width:120px">5.9</div>
<div class="cell cve" style="left:519px;width:131px">CVE-2018-12404</div>
<div class="cell sev" style="left:651px;width:161px;background:#e9b100">MEDIUM</div>
<div class="cell ic" style="left:811px;width:150px"><svg class="ix" width="18" height="18" viewBox="0 0 18 18"><path d="M1.2 1.2L16.8 16.8M16.8 1.2L1.2 16.8" stroke="#000" stroke-width="2.3" stroke-linecap="butt"/></svg></div>
<div class="cell" style="left:961px;width:182px"><svg style="position:absolute;left:71px;top:6px" width="52" height="23" viewBox="0 0 52 23"><path d="M0.8 2.2L14.4 10.95L0.8 19.7Z" fill="#000"/><path d="M23.8 8.2A18.1 18.1 0 0 1 48.6 8.2" fill="none" stroke="#000" stroke-width="3.5"/><path d="M28.8 13.3A12 12 0 0 1 43.6 13.3" fill="none" stroke="#000" stroke-width="3.2"/><path d="M39.2 1.6L41.4 1.9L38.6 18.9A2.5 2.5 0 0 1 33.7 18.1Z" fill="#000" stroke="#fff" stroke-width="2.2" paint-order="stroke"/><path d="M39.2 1.6L41.4 1.9L38.6 18.9A2.5 2.5 0 0 1 33.7 18.1Z" fill="#000"/></svg></div>
<div class="cell ic" style="left:1143px;width:173px"><svg class="io" width="26" height="26" viewBox="0 0 26 26"><circle cx="13" cy="13" r="11.3" fill="none" stroke="#000" stroke-width="2.6"/></svg></div>
<div class="cell ic" style="left:1316px;width:190px"><svg class="io" width="26" height="26" viewBox="0 0 26 26"><circle cx="13" cy="13" r="11.3" fill="none" stroke="#000" stroke-width="2.6"/></svg></div>
<div class="cell dash" style="left:1506px;width:160px">-</div>
</div>
<div class="abs row" style="top:705px;background:#f9fafc">
<div class="cb" style="position:absolute;left:15px;top:7.5px"></div>
<div style="position:absolute;left:48px;top:0;width:1px;height:35px;background:#cdd3d3"></div>
<div class="cell sum" style="left:64px;width:318px"><span class="l">Linux kernel </span>におけるセキュリティ機能に関する脆弱性</div>
<div class="cell score" style="left:382px;width:120px">5.5</div>
<div class="cell cve" style="left:519px;width:131px">CVE-2018-15594</div>
<div class="cell sev" style="left:651px;width:161px;background:#e9b100">MEDIUM</div>
<div class="cell ic" style="left:811px;width:150px"><svg class="ix" width="18" height="18" viewBox="0 0 18 18"><path d="M1.2 1.2L16.8 16.8M16.8 1.2L1.2 16.8" stroke="#000" stroke-width="2.3" stroke-linecap="butt"/></svg></div>
<div class="cell ic" style="left:961px;width:182px"><svg width="16" height="18" viewBox="0 0 16 18"><rect x="0" y="0" width="5" height="18" fill="#000"/><rect x="10.5" y="0" width="5" height="18" fill="#000"/></svg></div>
<div class="cell ic" style="left:1143px;width:173px"><svg class="ix" width="18" height="18" viewBox="0 0 18 18"><path d="M1.2 1.2L16.8 16.8M16.8 1.2L1.2 16.8" stroke="#000" stroke-width="2.3" stroke-linecap="butt"/></svg></div>
<div class="cell ic" style="left:1316px;width:190px"><svg class="io" width="26" height="26" viewBox="0 0 26 26"><circle cx="13" cy="13" r="11.3" fill="none" stroke="#000" stroke-width="2.6"/></svg></div>
<div class="cell dash" style="left:1506px;width:160px">-</div>
</div>
<div class="abs row" style="top:740px;background:#fff">
<div class="cb" style="position:absolute;left:15px;top:7.5px"></div>
<div style="position:absolute;left:48px;top:0;width:1px;height:35px;background:#cdd3d3"></div>
<div class="cell sum" style="left:64px;width:318px"><span class="l">OpenSSH </span>におけるアクセス制御に関する脆弱性</div>
<div class="cell score" style="left:382px;width:120px">5.3</div>
<div class="cell cve" style="left:519px;width:131px">CVE-2018-20685</div>
<div class="cell sev" style="left:651px;width:161px;background:#e9b100">MEDIUM</div>
<div class="cell ic" style="left:811px;width:150px"><svg class="ix" width="18" height="18" viewBox="0 0 18 18"><path d="M1.2 1.2L16.8 16.8M16.8 1.2L1.2 16.8" stroke="#000" stroke-width="2.3" stroke-linecap="butt"/></svg></div>
<div class="cell" style="left:961px;width:182px"><svg style="position:absolute;left:71px;top:6px" width="52" height="23" viewBox="0 0 52 23"><path d="M0.8 2.2L14.4 10.95L0.8 19.7Z" fill="#000"/><path d="M23.8 8.2A18.1 18.1 0 0 1 48.6 8.2" fill="none" stroke="#000" stroke-width="3.5"/><path d="M28.8 13.3A12 12 0 0 1 43.6 13.3" fill="none" stroke="#000" stroke-width="3.2"/><path d="M39.2 1.6L41.4 1.9L38.6 18.9A2.5 2.5 0 0 1 33.7 18.1Z" fill="#000" stroke="#fff" stroke-width="2.2" paint-order="stroke"/><path d="M39.2 1.6L41.4 1.9L38.6 18.9A2.5 2.5 0 0 1 33.7 18.1Z" fill="#000"/></svg></div>
<div class="cell ic" style="left:1143px;width:173px"><svg class="io" width="26" height="26" viewBox="0 0 26 26"><circle cx="13" cy="13" r="11.3" fill="none" stroke="#000" stroke-width="2.6"/></svg></div>
<div class="cell ic" style="left:1316px;width:190px"><svg class="io" width="26" height="26" viewBox="0 0 26 26"><circle cx="13" cy="13" r="11.3" fill="none" stroke="#000" stroke-width="2.6"/></svg></div>
<div class="cell dash" style="left:1506px;width:160px">-</div>
</div>
<div class="abs" style="left:0;top:769px;width:1697px;height:1px;background:#dcdfe0"></div>
<div class="abs" style="left:0;top:770px;width:1697px;height:1px;background:#111"></div>
</body></html>
